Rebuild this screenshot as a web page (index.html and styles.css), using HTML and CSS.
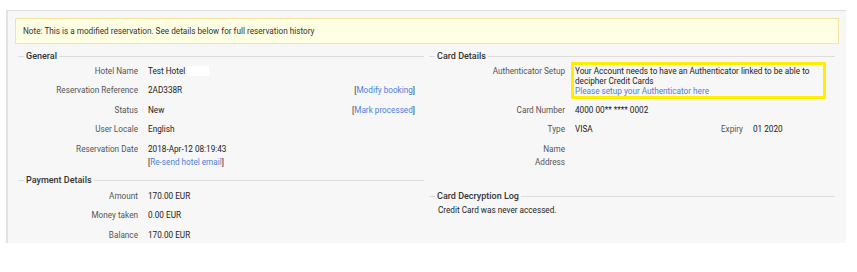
FILE: index.html
```html
<!DOCTYPE html>
<html>
<head>
<meta charset="utf-8">
<link rel="stylesheet" href="styles.css">
</head>
<body>
<div class="panel">
  <div class="note">Note: This is a modified reservation. See details below for full reservation history</div>
  <div class="cols">
    <div class="col left">
      <div class="legend"><span>General</span></div>
      <div class="rows">
        <div class="row"><div class="lbl">Hotel Name</div><div class="val">Test Hotel <span class="mask"></span></div></div>
        <div class="row"><div class="lbl">Reservation Reference</div><div class="val">2AD338R</div><div class="act">[<a>Modify booking</a>]</div></div>
        <div class="row"><div class="lbl">Status</div><div class="val">New</div><div class="act">[<a>Mark processed</a>]</div></div>
        <div class="row"><div class="lbl">User Locale</div><div class="val">English</div></div>
        <div class="row"><div class="lbl">Reservation Date</div><div class="val">2018-Apr-12 08:19:43<br>[<a>Re-send hotel email</a>]</div></div>
      </div>
      <div class="legend pay"><span>Payment Details</span></div>
      <div class="rows">
        <div class="row"><div class="lbl">Amount</div><div class="val">170.00 EUR</div></div>
        <div class="row"><div class="lbl">Money taken</div><div class="val">0.00 EUR</div></div>
        <div class="row"><div class="lbl">Balance</div><div class="val">170.00 EUR</div></div>
      </div>
    </div>
    <div class="col right">
      <div class="legend"><span>Card Details</span></div>
      <div class="rows">
        <div class="row"><div class="lbl">Authenticator Setup</div><div class="val"><div class="auth">Your Account needs to have an Authenticator linked to be able to decipher Credit Cards<br><a>Please setup your Authenticator here</a></div></div></div>
        <div class="row"><div class="lbl">Card Number</div><div class="val">4000 00** **** 0002</div></div>
        <div class="row"><div class="lbl">Type</div><div class="val split"><span>VISA</span><span class="exp-l">Expiry</span><span>01 2020</span></div></div>
        <div class="row"><div class="lbl">Name<br>Address</div><div class="val"></div></div>
      </div>
      <div class="legend log"><span>Card Decryption Log</span></div>
      <div class="logtext">Credit Card was never accessed.</div>
    </div>
  </div>
</div>
</body>
</html>
```
FILE: styles.css
```css
body {
  margin: 0;
  background: #fff;
  font-family: Roboto, "Liberation Sans", sans-serif;
  font-size: 8.2px;
  color: #222;
}
.panel {
  margin: 10px 11px 0 6px;
  height: 233px;
  box-sizing: border-box;
  background: #f7f7f7;
  border-top: 1px solid #dedede;
  border-left: 2px solid #e2e2e2;
  padding: 7px 7px 0 7px;
  overflow: hidden;
}
.note {
  height: 26px;
  box-sizing: border-box;
  background: #ffffe3;
  border: 1px solid #f6e3a0;
  padding-left: 7px;
  line-height: 24px;
  color: #333;
}
.cols {
  display: grid;
  grid-template-columns: 406px 406px;
  column-gap: 5px;
  margin: 0 3px;
}
.legend {
  display: flex;
  align-items: center;
  height: 12px;
  margin-top: 6px;
  font-weight: 500;
  font-size: 9px;
  color: #333;
}
.legend::before {
  content: "";
  width: 6px;
  border-top: 1px solid #ddd;
  margin-right: 2px;
}
.legend::after {
  content: "";
  flex: 1;
  border-top: 1px solid #ddd;
  margin-left: 2px;
}
.rows {
  display: flex;
  flex-direction: column;
  gap: 6.5px;
  margin-top: 2.5px;
}
.row {
  display: flex;
  line-height: 13px;
}
.lbl {
  text-align: right;
  color: #555;
  flex: none;
}
.left .lbl { width: 120px; }
.right .lbl { width: 136px; }
.val {
  margin-left: 10px;
  flex: 1;
}
.act {
  padding-right: 9px;
  color: #333;
}
a {
  color: #4b7fd8;
}
.mask {
  display: inline-block;
  width: 22px;
  height: 10px;
  background: #fff;
  vertical-align: middle;
}
.legend.pay { margin-top: 5.5px; }
.pay + .rows { margin-top: 3.5px; }
.auth {
  margin: -2.5px 0 -2px -4px;
  width: 255px;
  box-sizing: border-box;
  border: 3px solid #ffee00;
  padding: 1px;
  line-height: 10px;
  height: 37px;
}
.split {
  display: flex;
}
.split span:first-child { width: 158px; }
.exp-l {
  width: 10px;
  text-align: right;
  color: #555;
  display: flex;
  justify-content: flex-end;
  margin-right: 10px;
}
.legend.log { margin-top: 21.5px; }
.logtext {
  line-height: 13px;
  margin-left: 9px;
  margin-top: 1.5px;
}
```
